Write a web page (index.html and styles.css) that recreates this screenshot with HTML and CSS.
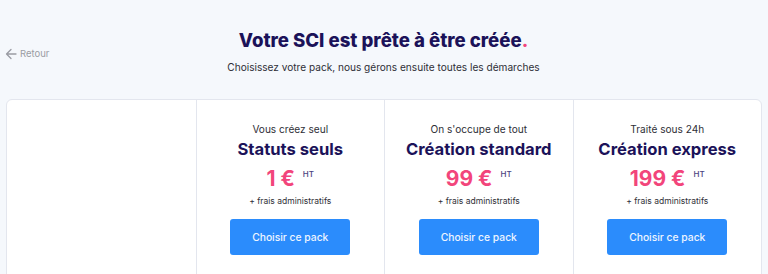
FILE: index.html
```html
<!DOCTYPE html>
<html lang="fr">
<head>
<meta charset="utf-8">
<link rel="stylesheet" href="styles.css">
</head>
<body>
<header class="top">
  <a class="back" href="#">
    <svg width="12" height="12" viewBox="0 0 12 12" fill="none" stroke="#9a9ca3" stroke-width="1.3" stroke-linecap="round" stroke-linejoin="round"><path d="M11 6H1.5M6 1.5L1.5 6L6 10.5"/></svg>
    <span>Retour</span>
  </a>
  <div class="heading">
    <h1>Votre SCI est prête à être créée<span class="dot">.</span></h1>
    <p class="sub">Choisissez votre pack, nous gérons ensuite toutes les démarches</p>
  </div>
  <div></div>
</header>
<main class="card">
  <div class="col empty"></div>
  <div class="col">
    <p class="tag">Vous créez seul</p>
    <h2>Statuts seuls</h2>
    <p class="price">1 €<sup>HT</sup></p>
    <p class="fees">+ frais administratifs</p>
    <button class="btn">Choisir ce pack</button>
  </div>
  <div class="col">
    <p class="tag">On s'occupe de tout</p>
    <h2>Création standard</h2>
    <p class="price">99 €<sup>HT</sup></p>
    <p class="fees">+ frais administratifs</p>
    <button class="btn">Choisir ce pack</button>
  </div>
  <div class="col">
    <p class="tag">Traité sous 24h</p>
    <h2>Création express</h2>
    <p class="price">199 €<sup>HT</sup></p>
    <p class="fees">+ frais administratifs</p>
    <button class="btn">Choisir ce pack</button>
  </div>
</main>
</body>
</html>
```
FILE: styles.css
```css
* { box-sizing: border-box; }
html, body { margin: 0; padding: 0; }
body {
  background: #f5f8fc;
  font-family: Inter, "Liberation Sans", sans-serif;
  color: #2a2a35;
  height: 274px;
  overflow: hidden;
}
.top {
  display: grid;
  grid-template-columns: 1fr auto 1fr;
  align-items: center;
  padding: 28px 6px 0 5px;
  height: 99px;
  align-content: start;
}
.back {
  display: flex;
  align-items: center;
  gap: 3px;
  color: #9a9ca3;
  text-decoration: none;
  font-size: 9.5px;
  margin-top: 5px;
}
.heading { text-align: center; }
h1 {
  margin: 0;
  font-size: 18.6px;
  font-weight: 800;
  color: #1b1259;
  letter-spacing: 0;
  line-height: 24px;
}
.dot { color: #f2457b; }
.sub {
  margin: 8px 0 0;
  font-size: 10.1px;
  color: #2f2f37;
  line-height: 14px;
}
.card {
  margin: 0 6px;
  background: #fff;
  border: 1px solid #e3e6ee;
  border-radius: 6px;
  display: grid;
  grid-template-columns: repeat(4, 1fr);
  height: 200px;
}
.col {
  border-left: 1px solid #e3e6ee;
  display: flex;
  flex-direction: column;
  align-items: center;
  padding-top: 22px;
}
.col.empty { border-left: 0; }
.tag {
  margin: 0;
  font-size: 10.1px;
  line-height: 14px;
  color: #2f2f37;
}
h2 {
  margin: 3px 0 0;
  font-size: 16.6px;
  line-height: 20px;
  font-weight: 700;
  color: #1b1259;
}
.price {
  margin: 8px 0 0;
  font-size: 21px;
  line-height: 24px;
  font-weight: 700;
  color: #f2457b;
  display: flex;
  align-items: flex-start;
}
.price sup {
  font-size: 8px;
  line-height: 10px;
  font-weight: 500;
  color: #4b4380;
  margin-left: 8px;
  margin-top: 2px;
}
.fees {
  margin: 4px 0 0;
  font-size: 8.5px;
  line-height: 12px;
  color: #2f2f37;
}
.btn {
  margin-top: 12px;
  width: 120px;
  height: 36px;
  border: 0;
  border-radius: 3px;
  background: #2b8cfc;
  color: #eef5ff;
  font-family: inherit;
  font-size: 10.3px;
  font-weight: 500;
}
```
